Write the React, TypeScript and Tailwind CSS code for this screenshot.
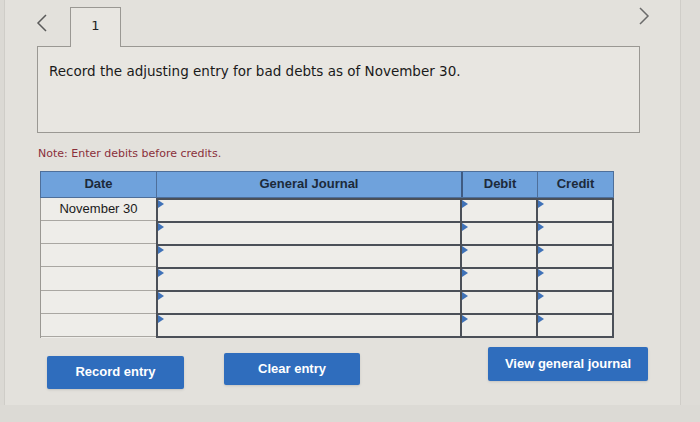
import React from "react";

export default function App() {
  const rows = [0, 1, 2, 3, 4, 5];
  const cols = [0, 1, 2];
  return (
    <div className="w-[700px] h-[422px] bg-[#e3e1dc] overflow-hidden relative" style={{ fontFamily: "'DejaVu Sans', sans-serif" }}>
      <div className="absolute left-[680px] top-0 w-[20px] h-full bg-[#dedcd7] border-l border-[#cfcdc8]" />
      <div className="absolute left-0 top-0 w-[5px] h-full bg-[#dbd9d4] border-r border-[#cfcdc8]" />
      <div className="absolute left-0 top-[405px] w-full h-[17px] bg-[#dcdad5]" />

      <div className="relative">
        {/* top nav */}
        <div className="flex items-end h-[46px] pl-[36px] pt-[8px]">
          <svg width="12" height="18" viewBox="0 0 12 18" className="mb-[14px] mr-[22px]">
            <path d="M10 1 L2 9 L10 17" fill="none" stroke="#5a5a5a" strokeWidth="1.5" />
          </svg>
          <div className="w-[51px] h-[40px] border border-b-0 border-[#9a9893] bg-[#e8e6e1] flex justify-center pt-[8px] text-[13px] text-[#222] relative z-10 -mb-px">
            1
          </div>
          <div className="flex-1" />
          <svg width="12" height="18" viewBox="0 0 12 18" className="mr-[50px] mb-[21px]">
            <path d="M2 1 L10 9 L2 17" fill="none" stroke="#6a6a6a" strokeWidth="1.5" />
          </svg>
        </div>

        {/* question box */}
        <div className="ml-[37px] w-[603px] h-[87px] border border-[#9a9893] bg-[#e8e6e1] px-[11px] pt-[14px]">
          <p className="text-[13.5px] text-[#1a1a1a]">Record the adjusting entry for bad debts as of November 30.</p>
        </div>

        <p className="ml-[38px] mt-[13px] text-[11px] text-[#8a2f3a]">Note: Enter debits before credits.</p>

        {/* table */}
        <div className="ml-[40px] mt-[8px] w-[574px]" style={{ fontFamily: "'Liberation Sans', Arial, sans-serif" }}>
          <div className="flex h-[27px] bg-[#6fa2dc] border border-[#4e6f9a] text-[13px] font-bold text-[#1c2a3a]">
            <div className="w-[116px] flex items-center justify-center border-r border-[#4e6f9a]">Date</div>
            <div className="w-[306px] flex items-center justify-center border-r-[2px] border-[#3f5b82]">General Journal</div>
            <div className="w-[75px] flex items-center justify-center border-r border-[#4e6f9a]">Debit</div>
            <div className="flex-1 flex items-center justify-center">Credit</div>
          </div>
          <div className="flex h-[140px]">
            <div className="w-[116px] flex flex-col border-l border-[#9a9893] bg-[#eeede9]">
              {rows.map((r) => (
                <div key={r} className="flex-1 border-b border-[#a9a7a2] flex items-center justify-center text-[13px] text-[#1a1a1a]">
                  {r === 0 ? "November 30" : ""}
                </div>
              ))}
            </div>
            <div className="flex-1 grid grid-cols-[302px_74px_74px] grid-rows-6 gap-[2px] p-[2px] bg-[#4b5058]">
              {rows.map((r) =>
                cols.map((c) => (
                  <div key={`${r}-${c}`} className="relative bg-[#eeede9]">
                    <div className="absolute left-0 top-0 w-0 h-0 border-t-[4px] border-b-[4px] border-l-[6px] border-t-transparent border-b-transparent border-l-[#3f72b8]" />
                  </div>
                ))
              )}
            </div>
          </div>
        </div>

        {/* buttons */}
        <div className="flex items-start ml-[47px] mt-[12px]" style={{ fontFamily: "'Liberation Sans', Arial, sans-serif" }}>
          <button className="w-[137px] h-[33px] mt-[6px] bg-[#2f6dbd] text-white text-[13px] font-bold rounded-[2px] shadow-sm">Record entry</button>
          <button className="w-[136px] h-[32px] mt-[3px] ml-[40px] bg-[#2f6dbd] text-white text-[13px] font-bold rounded-[2px] shadow-sm">Clear entry</button>
          <button className="w-[160px] h-[34px] ml-[128px] -mt-[3px] bg-[#2f6dbd] text-white text-[13px] font-bold rounded-[2px] shadow-sm">View general journal</button>
        </div>
      </div>
    </div>
  );
}
